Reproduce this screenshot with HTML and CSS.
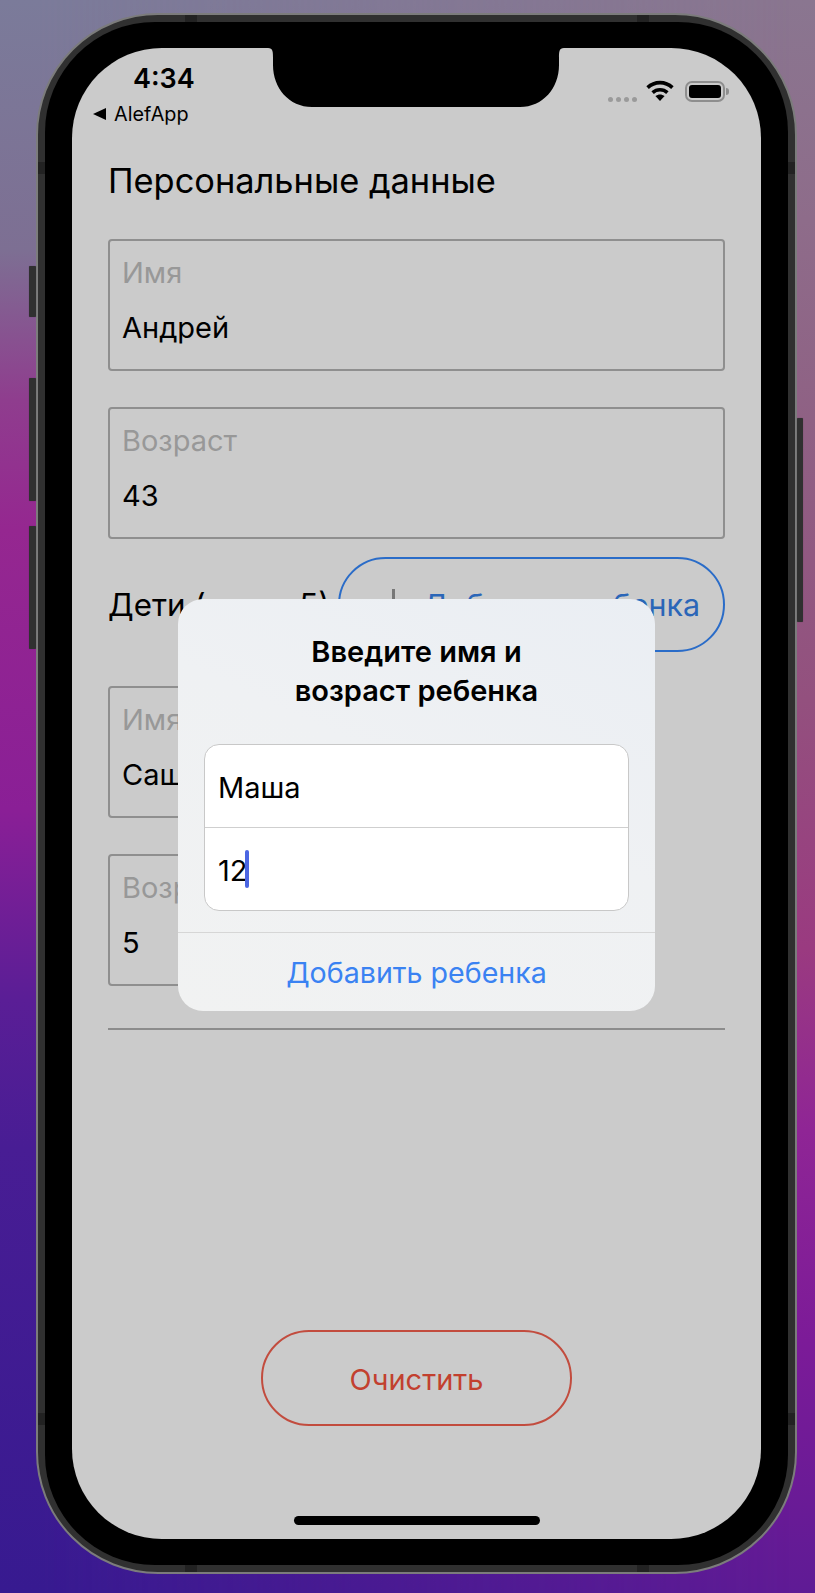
FILE: index.html
```html
<!DOCTYPE html>
<html lang="ru">
<head>
<meta charset="utf-8">
<title>AlefApp</title>
<link rel="stylesheet" href="styles.css">
</head>
<body>
<div class="wall"></div>
<div class="phone">
  <span class="key key-a"></span>
  <span class="key key-b"></span>
  <span class="key key-c"></span>
  <span class="key key-d"></span>
  <span class="band band-lt"></span>
  <span class="band band-rt"></span>
  <span class="band band-lb"></span>
  <span class="band band-rb"></span>
  <span class="band-h band-tl"></span>
  <span class="band-h band-tr"></span>
  <span class="band-h band-bl"></span>
  <span class="band-h band-br"></span>
  <div class="bezel">
    <main class="screen">
      <svg class="notch" viewBox="0 0 296 59" width="296" height="59" aria-hidden="true">
        <path d="M0 0H296C291 0 291 4 291 10V17C291 40 275 59 252 59H44C21 59 5 40 5 17V10C5 4 5 0 0 0Z"/>
      </svg>
      <header class="status">
        <div class="status-left">
          <div class="time">4:34</div>
          <div class="back"><span class="back-arrow"></span><span>AlefApp</span></div>
        </div>
        <div class="status-right">
          <span class="dots"><i></i><i></i><i></i><i></i></span>
          <svg class="wifi" viewBox="0 0 28 21" width="28" height="21" aria-hidden="true">
            <path class="arc" d="M1.6 7.6C8.6 .9 19.4 .9 26.4 7.6"/>
            <path class="arc" d="M6.6 12.6C10.8 8.7 17.2 8.7 21.4 12.6"/>
            <path d="M14 21L9.4 16.1C12.2 13.8 15.8 13.8 18.6 16.1Z"/>
          </svg>
          <span class="battery"><span class="battery-fill"></span></span>
          <span class="battery-nub"></span>
        </div>
      </header>

      <div class="content">
        <h1 class="title">Персональные данные</h1>
        <div class="field field-first">
          <div class="label">Имя</div>
          <div class="value">Андрей</div>
        </div>
        <div class="field">
          <div class="label">Возраст</div>
          <div class="value">43</div>
        </div>
        <div class="kids-row">
          <div class="kids-title">Дети (макс. 5)</div>
          <div class="add-btn"><span class="plus"></span><span>Добавить ребенка</span></div>
        </div>
        <div class="field field-child field-child-first">
          <div class="label">Имя</div>
          <div class="value">Саша</div>
        </div>
        <div class="field field-child">
          <div class="label">Возраст</div>
          <div class="value">5</div>
        </div>
        <div class="divider"></div>
      </div>

      <div class="clear-btn">Очистить</div>
      <div class="home"></div>

      <div class="dialog">
        <div class="dialog-title">Введите имя и<br>возраст ребенка</div>
        <div class="inputs">
          <div class="input">Маша</div>
          <div class="input input-last">12<span class="caret"></span></div>
        </div>
        <div class="dialog-action">Добавить ребенка</div>
      </div>
    </main>
  </div>
</div>
</body>
</html>
```

FILE: styles.css
```css
* { box-sizing: border-box; }
html, body { margin: 0; padding: 0; }
body {
  position: relative;
  width: 815px;
  height: 1593px;
  overflow: hidden;
  padding: 13px 18px 0 36px;
  font-family: "Inter", "Liberation Sans", sans-serif;
  color: #000;
  background: linear-gradient(180deg, #8a7690 0, #8e6c8a 220px, #8f6184 420px, #93507e 700px, #9a3a80 950px, #8f2595 1130px, #7c1b98 1340px, #5f1b95 1593px);
}
.wall {
  position: absolute;
  inset: 0;
  background: linear-gradient(180deg, #7b7b9a 0, #7d6f93 250px, #8f3d8e 400px, #952790 530px, #8a1f96 810px, #5a1e96 1000px, #481d94 1150px, #371a90 1593px);
  -webkit-mask-image: linear-gradient(90deg, #000 5%, transparent 97%);
  mask-image: linear-gradient(90deg, #000 5%, transparent 97%);
}
.phone {
  position: relative;
  width: 761px;
  height: 1561px;
  padding: 7px;
  background: #303030;
  border: 2px solid #7c7c7c;
  border-radius: 122px;
}
.key { position: absolute; background: #303030; border-radius: 1px; box-shadow: 0 0 1px rgba(0,0,0,.4); }
.key-a { left: -9px; top: 251px; width: 7px; height: 51px; }
.key-b { left: -9px; top: 363px; width: 7px; height: 123px; }
.key-c { left: -9px; top: 511px; width: 7px; height: 123px; }
.key-d { right: -8px; top: 403px; width: 6px; height: 204px; }
.band { position: absolute; width: 7px; height: 12px; background: #222; }
.band-lt { left: 0; top: 147px; }
.band-rt { right: 0; top: 147px; }
.band-lb { left: 0; top: 1398px; }
.band-rb { right: 0; top: 1398px; }
.band-h { position: absolute; width: 12px; height: 7px; background: #222; }
.band-tl { left: 147px; top: 0; }
.band-tr { right: 146px; top: 0; }
.band-bl { left: 147px; bottom: 0; }
.band-br { right: 146px; bottom: 0; }
.bezel {
  width: 743px;
  height: 1543px;
  padding: 26px 27px;
  background: #000;
  border-radius: 110px;
}
.screen {
  position: relative;
  display: flex;
  flex-direction: column;
  width: 689px;
  height: 1491px;
  background: #cbcbcb;
  border-radius: 90px;
  overflow: hidden;
}
.notch { position: absolute; left: 196px; top: 0; fill: #000; }
.status { display: flex; justify-content: space-between; height: 113px; }
.status-left { padding: 18px 0 0 21px; }
.time {
  margin-left: 40px;
  font-size: 27px;
  line-height: 26px;
  font-weight: 600;
}
.back {
  display: flex;
  align-items: center;
  gap: 8px;
  margin-top: 10px;
  font-size: 19.8px;
  line-height: 24px;
}
.back-arrow {
  width: 0;
  height: 0;
  border-style: solid;
  border-width: 6px 13px 6px 0;
  border-color: transparent #000 transparent transparent;
}
.status-right {
  display: flex;
  align-items: flex-start;
  padding: 32px 32px 0 0;
}
.dots { display: flex; gap: 3px; margin: 17px 9px 0 0; }
.dots i { width: 5px; height: 5px; background: #9a9a9a; border-radius: 50%; }
.wifi { fill: #000; margin-right: 11px; }
.wifi .arc { fill: none; stroke: #000; stroke-width: 3.6; }
.battery {
  display: block;
  width: 40px;
  height: 21px;
  margin-top: 1px;
  padding: 2px;
  border: 2px solid #8e8e8e;
  border-radius: 7px;
}
.battery-fill { display: block; height: 100%; background: #000; border-radius: 3px; }
.battery-nub {
  width: 3px;
  height: 7px;
  margin: 8px 0 0 1px;
  background: #8e8e8e;
  border-radius: 0 3px 3px 0;
}
.content { padding: 0 36px; }
.title {
  margin: 0;
  font-size: 34.4px;
  line-height: 40px;
  font-weight: 400;
}
.field {
  height: 132px;
  margin-top: 36px;
  padding: 11px 12px 0;
  border: 2px solid #8f8f8f;
  border-radius: 4px;
}
.field-first { margin-top: 38px; }
.field-child { width: 500px; }
.field-child-first { margin-top: 34px; }
.label { font-size: 29px; line-height: 42px; color: #989898; }
.value { margin-top: 14px; font-size: 29px; line-height: 40px; }
.kids-row {
  display: flex;
  align-items: center;
  justify-content: space-between;
  margin-top: 18px;
}
.kids-title { font-size: 31.3px; line-height: 40px; }
.add-btn {
  position: relative;
  display: flex;
  align-items: center;
  justify-content: flex-end;
  width: 387px;
  height: 95px;
  padding-right: 23px;
  border: 2px solid #2a6cc8;
  border-radius: 48px;
  font-size: 30.4px;
  color: #2a66b8;
}
.plus {
  position: absolute;
  left: 38px;
  top: 30px;
  width: 30px;
  height: 30px;
  background:
    linear-gradient(#777, #777) center / 3px 30px no-repeat,
    linear-gradient(#777, #777) center / 30px 3px no-repeat;
}
.divider { height: 2px; margin-top: 42px; background: #8c8c8c; }
.clear-btn {
  display: flex;
  align-items: center;
  justify-content: center;
  align-self: center;
  width: 311px;
  height: 96px;
  margin-top: auto;
  padding-top: 2px;
  border: 2px solid #c24c3e;
  border-radius: 48px;
  font-size: 29px;
  color: #c2402f;
}
.home {
  align-self: center;
  width: 246px;
  height: 9px;
  margin: 90px 0 14px;
  background: #000;
  border-radius: 5px;
}
.dialog {
  position: absolute;
  left: 106px;
  top: 551px;
  width: 477px;
  height: 412px;
  background: linear-gradient(205deg, #eaeef3 0, #eff1f3 45%, #f1f2f2 100%);
  border-radius: 25px;
  overflow: hidden;
}
.dialog-title {
  padding-top: 33px;
  font-size: 29px;
  line-height: 39px;
  font-weight: 600;
  text-align: center;
}
.inputs {
  height: 167px;
  margin: 34px 26px 21px;
  background: #fff;
  border: 1px solid #c8c8c8;
  border-radius: 15px;
  font-size: 29px;
}
.input {
  display: flex;
  align-items: center;
  height: 83px;
  padding: 3px 0 0 13px;
  border-bottom: 1px solid #cfcfcf;
}
.input-last { height: 82px; border-bottom: 0; }
.caret { width: 4px; height: 38px; margin: -3px 0 0 -2px; background: #4b66e2; border-radius: 2px; }
.dialog-action {
  display: flex;
  align-items: center;
  justify-content: center;
  height: 79px;
  border-top: 1px solid #d6d6d6;
  font-size: 28.6px;
  color: #3a82f2;
}
```
